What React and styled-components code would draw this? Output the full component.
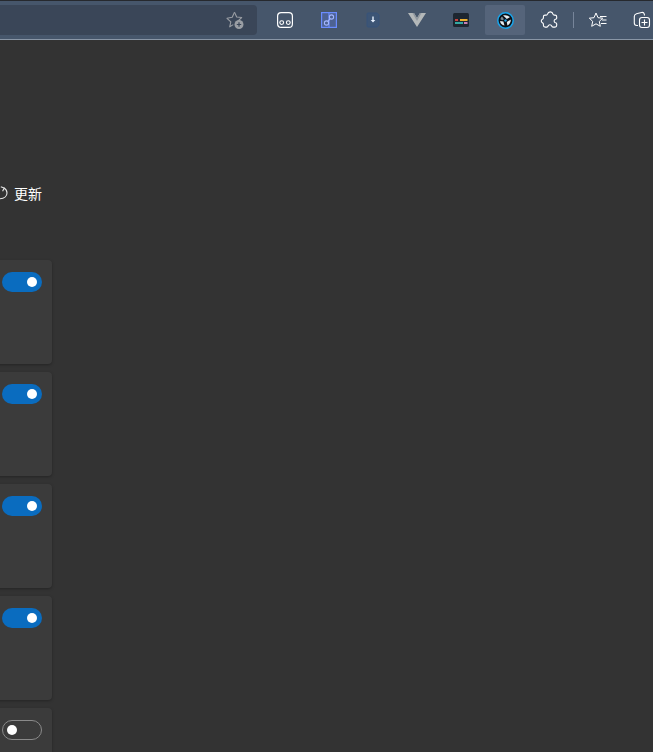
import styled, { createGlobalStyle } from "styled-components";

const GlobalStyle = createGlobalStyle`
  html, body {
    margin: 0;
    height: 100%;
    overflow: hidden;
    background: #333333;
  }
`;

function AddFavoriteIcon() {
  return (
    <svg width="20" height="20" viewBox="0 0 20 20" fill="none">
      <path d="M9.500 2.200 11.700 7l5 .5-3.600 3.300" stroke="#9a9ea4" strokeWidth="1.100" strokeLinejoin="round" />
      <path d="M8.300 14.600 4.700 16.800l1.100-5L2 8.300 7.200 7.200 9.500 2.200" stroke="#9a9ea4" strokeWidth="1.100" strokeLinejoin="round" />
      <circle cx="14" cy="14.500" r="4.500" fill="#9a9ea4" />
      <path d="M14 12.300v4.400M11.800 14.500h4.400" stroke="#3a4658" strokeWidth="1.200" />
    </svg>
  );
}

function MaskIcon() {
  return (
    <svg width="16" height="16" viewBox="0 0 16 16" fill="none">
      <rect x="0.600" y="0.600" width="14.800" height="14.800" rx="3.500" stroke="#fff" strokeWidth="1.200" />
      <circle cx="4.700" cy="10.600" r="1.900" stroke="#fff" strokeWidth="1.100" />
      <circle cx="11.300" cy="10.600" r="1.900" stroke="#fff" strokeWidth="1.100" />
    </svg>
  );
}

function SplitIcon() {
  return (
    <svg width="16" height="16" viewBox="0 0 16 16" fill="none">
      <rect x="0.600" y="0.600" width="14.800" height="14.800" fill="#5f7df0" fillOpacity="0.300" stroke="#6a8cff" strokeWidth="1.200" />
      <path d="M8 1v14" stroke="#6a8cff" strokeWidth="1.200" />
      <circle cx="10.500" cy="5" r="2.100" stroke="#a3b6ff" strokeWidth="1.100" />
      <circle cx="5.500" cy="11" r="2.100" stroke="#a3b6ff" strokeWidth="1.100" />
      <path d="M9.200 6.600 6.800 9.400" stroke="#a3b6ff" strokeWidth="1.100" />
    </svg>
  );
}

function DownloadIcon() {
  return (
    <svg width="14" height="16" viewBox="0 0 14 16" fill="none">
      <path d="M2 1h9l2 2v10l-2 2H2a1 1 0 0 1-1-1V2a1 1 0 0 1 1-1z" fill="#3d5575" stroke="#37537a" />
      <path d="M7 4.500v4" stroke="#e8f2ff" strokeWidth="1.400" />
      <path d="M4.700 8h4.600L7 10.500z" fill="#e8f2ff" />
    </svg>
  );
}

function VeeIcon() {
  return (
    <svg width="18" height="14" viewBox="0 0 18 14">
      <path d="M0 0h6l3 5L12 0h6L9 14z" fill="#b4b8b9" />
      <path d="M4.500 0H6l3 5 3-5h1.500L9 8z" fill="#8f979e" />
    </svg>
  );
}

function PanelIcon() {
  return (
    <svg width="16" height="14" viewBox="0 0 16 14">
      <rect width="16" height="14" rx="1.500" fill="#1d2630" />
      <rect x="2" y="6" width="3" height="2" fill="#c9433e" />
      <rect x="7" y="6" width="7.500" height="2" fill="#eeb02e" />
      <rect x="2" y="9" width="8" height="2" fill="#35a8a2" />
      <rect x="11" y="9" width="3.500" height="2" fill="#c77fb4" />
    </svg>
  );
}

function ApertureIcon() {
  return (
    <svg width="17" height="17" viewBox="0 0 17 17" fill="none">
      <circle cx="8.500" cy="8.500" r="7.700" fill="#0b1118" stroke="#19a4ea" strokeWidth="1.500" />
      <path d="M6 3.600 C8.500 2.700 11.400 3.400 12.800 5.200 L9.800 7 C8.800 5.800 7.400 4.900 6 3.600z" fill="#e6eef2" />
      <path d="M13.700 7.600 C14 10.300 12.600 12.500 10.400 13.400 L9.800 10 C11 9.300 12.300 8.500 13.700 7.600z" fill="#e6eef2" />
      <path d="M7.500 13.600 C5 13.300 3.300 11.500 3.100 9 L6.400 9.500 C6.700 10.900 7.100 12.200 7.500 13.600z" fill="#e6eef2" />
      <path d="M3.300 7.300 C3.600 6 4.200 5.100 5 4.400 L7 7.200 L5.500 8.200z" fill="#7d8a92" />
      <circle cx="8.500" cy="8.500" r="1.200" fill="#19a4ea" />
    </svg>
  );
}

function PuzzleIcon() {
  return (
    <svg width="18" height="18" viewBox="-1 0 18 18" fill="none">
      <path
        d="M6.500 3.200C7 1.400 8.200.9 9.300.9c1.300 0 2.400.9 2.700 2.200.2.700.7 1 1.300 1h.8c1 0 1.600.7 1.600 1.600v1.500c0 .7-.5 1-1.200 1.100a1.800 1.800 0 0 0 0 3.500c.7.100 1.200.5 1.200 1.100v1.400c0 1.100-.7 1.800-1.700 1.800h-2c-.7 0-1.100-.5-1.300-1.100a1.900 1.900 0 0 0-3.600 0c-.2.600-.6 1.100-1.300 1.100H4.200c-1.100 0-1.800-.7-1.800-1.800v-1.200c0-.7-.4-1-1-1.300a2 2 0 0 1 0-3.600c.6-.3 1-.6 1-1.300V5.700c0-.9.700-1.600 1.600-1.600h1.200c.6 0 1.100-.3 1.300-.9z"
        stroke="#fff"
        strokeWidth="1.100"
      />
    </svg>
  );
}

function FavoritesIcon() {
  return (
    <svg width="18" height="17" viewBox="0 0 18 17" fill="none">
      <path d="M7 1 9 5.700l4.700.5-3.400 3.200 1 4.900L7 11.800 2.700 14.300l1-4.900L.3 6.200 5 5.700z" stroke="#fff" strokeWidth="1" strokeLinejoin="round" />
      <path d="M11 4.500h6.500M13 8h4.500M12 11.500h5.500" stroke="#fff" strokeWidth="1" />
    </svg>
  );
}

function CollectionsIcon() {
  return (
    <svg width="18" height="18" viewBox="0 0 18 18" fill="none">
      <path d="M5 14.500H3.800A2.500 2.500 0 0 1 1.300 12V5.500a3 3 0 0 1 2.200-2.800l5-1.200c1.300-.3 2.500.5 2.800 1.700l.2 1.300" stroke="#fff" strokeWidth="1.100" />
      <rect x="6.500" y="6.500" width="10" height="10" rx="2.500" fill="#46566b" stroke="#fff" strokeWidth="1.100" />
      <path d="M11.500 8.500v6M8.500 11.500h6" stroke="#fff" strokeWidth="1.100" />
    </svg>
  );
}

function RefreshIcon() {
  return (
    <svg width="9" height="16" viewBox="0 0 9 16" fill="none">
      <path d="M0 13.800C4.500 13.500 7 10.800 7 8 7 5.800 5.800 4 4 3" stroke="#e6e6e6" strokeWidth="1.100" />
      <path d="M.8 1.800 4.200 3 2.600 6.200" stroke="#e6e6e6" strokeWidth="1.100" />
    </svg>
  );
}

function Toggle({ on }) {
  return (
    <Track $on={on}>
      <Knob />
    </Track>
  );
}

const settings = [true, true, true, true, false];

export default function App() {
  return (
    <Page>
      <GlobalStyle />
      <Toolbar>
        <AddressBar>
          <AddFavoriteIcon />
        </AddressBar>
        <Extensions>
          <ToolButton><MaskIcon /></ToolButton>
          <ToolButton><SplitIcon /></ToolButton>
          <ToolButton><DownloadIcon /></ToolButton>
          <ToolButton><VeeIcon /></ToolButton>
          <ToolButton><PanelIcon /></ToolButton>
          <ToolButton $active><ApertureIcon /></ToolButton>
          <ToolButton><PuzzleIcon /></ToolButton>
          <Divider />
          <ToolButton><FavoritesIcon /></ToolButton>
          <ToolButton><CollectionsIcon /></ToolButton>
        </Extensions>
      </Toolbar>
      <Content>
        <UpdateButton>
          <RefreshIcon />
          <span>更新</span>
        </UpdateButton>
        <CardList>
          {settings.map((on, i) => (
            <Card key={i}>
              <Toggle on={on} />
            </Card>
          ))}
        </CardList>
      </Content>
    </Page>
  );
}

// design

const Page = styled.div`
  width: 653px;
  height: 752px;
  overflow: hidden;
  background: #333333;
  font-family: "Liberation Sans", "Noto Sans CJK SC", sans-serif;
`;

const Toolbar = styled.header`
  box-sizing: border-box;
  height: 40px;
  display: flex;
  align-items: center;
  gap: 8px;
  background: #46566b;
  border-top: 1px solid #26292e;
  border-bottom: 1px solid #8996a6;
`;

const AddressBar = styled.div`
  box-sizing: border-box;
  flex: none;
  width: 257px;
  height: 30px;
  display: flex;
  align-items: center;
  justify-content: flex-end;
  padding-right: 12px;
  background: #3a4658;
  border-radius: 0 4px 4px 0;
`;

const Extensions = styled.div`
  display: flex;
  align-items: center;
`;

const ToolButton = styled.div`
  flex: none;
  width: 40px;
  height: 30px;
  margin-right: 4px;
  display: flex;
  align-items: center;
  justify-content: center;
  border-radius: 2px;
  background: ${(p) => (p.$active ? "#55647a" : "transparent")};
`;

const Divider = styled.div`
  flex: none;
  width: 1px;
  height: 16px;
  margin: 0 4px 0 0;
  background: #77859a;
`;

const Content = styled.main`
  width: 52px;
`;

const UpdateButton = styled.div`
  height: 20px;
  margin-top: 143px;
  display: flex;
  align-items: center;
  gap: 5px;
  color: #ffffff;
  font-size: 14px;
  white-space: nowrap;
`;

const CardList = styled.div`
  margin-top: 57px;
  display: flex;
  flex-direction: column;
  gap: 8px;
`;

const Card = styled.section`
  box-sizing: border-box;
  flex: none;
  height: 104px;
  margin-left: -10px;
  padding: 12px 10px;
  display: flex;
  justify-content: flex-end;
  background: #3b3b3b;
  border-radius: 0 4px 4px 0;
  box-shadow: 0 1px 3px rgba(0, 0, 0, 0.3);
`;

const Track = styled.div`
  box-sizing: border-box;
  width: 40px;
  height: 20px;
  padding: 0 ${(p) => (p.$on ? "5px" : "4px")};
  display: flex;
  align-items: center;
  justify-content: ${(p) => (p.$on ? "flex-end" : "flex-start")};
  border-radius: 10px;
  background: ${(p) => (p.$on ? "#0a6cbf" : "transparent")};
  border: ${(p) => (p.$on ? "none" : "1px solid #8a8a8a")};
`;

const Knob = styled.div`
  width: 10px;
  height: 10px;
  border-radius: 50%;
  background: #ffffff;
`;
